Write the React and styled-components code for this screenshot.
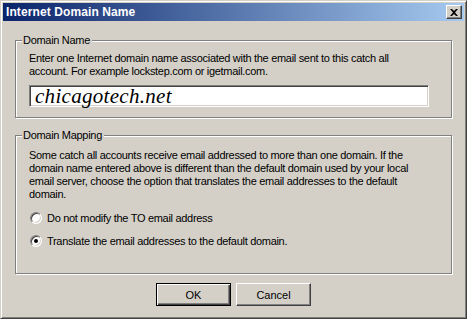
import React from 'react'
import styled, { createGlobalStyle } from 'styled-components'

const GlobalStyle = createGlobalStyle`
  html, body {
    margin: 0;
    padding: 0;
    background: #d4d0c8;
  }
  body {
    font-family: "Liberation Sans", Arial, sans-serif;
    font-size: 11px;
    color: #000;
  }
`

const Window = styled.div`
  box-sizing: border-box;
  width: 467px;
  height: 319px;
  background: #d4d0c8;
  border: 1px solid;
  border-color: #d4d0c8 #404040 #404040 #d4d0c8;
  box-shadow: inset 1px 1px 0 #fff, inset -1px -1px 0 #808080;
  padding: 2px;
  display: flex;
  flex-direction: column;
`

const TitleBar = styled.div`
  height: 18px;
  display: flex;
  align-items: center;
  justify-content: space-between;
  padding: 0 2px 0 3px;
  background: linear-gradient(to right, #0a246a, #a6caf0);
`

const Title = styled.span`
  color: #fff;
  font-weight: bold;
  font-size: 12px;
  letter-spacing: 0.1px;
`

const CloseButton = styled.button`
  box-sizing: border-box;
  width: 16px;
  height: 14px;
  padding: 0;
  display: flex;
  align-items: center;
  justify-content: center;
  background: #d4d0c8;
  border: 1px solid;
  border-color: #fff #404040 #404040 #fff;
  box-shadow: inset -1px -1px 0 #808080;
`

const Body = styled.div`
  flex: 1;
  display: flex;
  flex-direction: column;
  padding: 19px 12px 0 12px;
`

const GroupBox = styled.div`
  position: relative;
  border: 1px solid #808080;
  box-shadow: inset 1px 1px 0 #fff, 1px 1px 0 #fff;
  padding: ${p => p.$pad};
  margin-bottom: ${p => p.$gap || 0}px;
  letter-spacing: -0.3px;
`

const Legend = styled.span`
  position: absolute;
  top: -7px;
  left: 6px;
  padding: 0 2px 0 1px;
  background: #d4d0c8;
  line-height: 13px;
`

const Text = styled.p`
  margin: 0;
  line-height: 13px;
`

const Input = styled.div`
  box-sizing: border-box;
  width: 400px;
  height: 22px;
  margin-top: 7px;
  background: #fff;
  border: 1px solid;
  border-color: #808080 #fff #fff #808080;
  box-shadow: inset 1px 1px 0 #404040, inset -1px -1px 0 #d4d0c8;
  display: flex;
  align-items: center;
  padding-left: 5px;
  font-family: "Liberation Serif", "Times New Roman", serif;
  font-style: italic;
  font-size: 21px;
  letter-spacing: 0.3px;
`

const Options = styled.div`
  display: flex;
  flex-direction: column;
  gap: 9px;
  margin-top: 10px;
  padding-left: 1px;
`

const Option = styled.label`
  display: flex;
  align-items: center;
  gap: 5px;
  height: 14px;
`

const Radio = styled.span`
  box-sizing: border-box;
  width: 12px;
  height: 12px;
  border-radius: 50%;
  background: #fff;
  border: 1px solid;
  border-color: #808080 #fff #fff #808080;
  box-shadow: inset 1px 1px 0 #404040, inset -1px -1px 0 #d4d0c8;
  display: flex;
  align-items: center;
  justify-content: center;
  &::after {
    content: '';
    width: 4px;
    height: 4px;
    border-radius: 50%;
    background: ${p => (p.$checked ? '#000' : 'transparent')};
  }
`

const Buttons = styled.div`
  display: flex;
  justify-content: center;
  gap: 5px;
  margin-top: 9px;
`

const Button = styled.button`
  box-sizing: border-box;
  width: 75px;
  height: 23px;
  padding: 0;
  font-family: "Liberation Sans", Arial, sans-serif;
  font-size: 11px;
  color: #000;
  background: #d4d0c8;
  border: 1px solid;
  border-color: ${p => (p.$default ? '#000' : '#fff #404040 #404040 #fff')};
  box-shadow: ${p =>
    p.$default
      ? 'inset 1px 1px 0 #fff, inset -1px -1px 0 #404040, inset -2px -2px 0 #808080'
      : 'inset -1px -1px 0 #808080'};
`

const CloseIcon = () => (
  <svg width='8' height='7' viewBox='0 0 8 7'>
    <path d='M0 0h2l2 2 2-2h2L5 3.5 8 7H6L4 5 2 7H0l3-3.5z' fill='#000' />
  </svg>
)

const App = () => {
  return (
    <>
      <GlobalStyle />
      <Window>
        <TitleBar>
          <Title>Internet Domain Name</Title>
          <CloseButton>
            <CloseIcon />
          </CloseButton>
        </TitleBar>
        <Body>
          <GroupBox $pad='11px 13px 10px 13px' $gap={17}>
            <Legend>Domain Name</Legend>
            <Text>
              Enter one Internet domain name associated with the email sent to this catch all
              <br />
              account. For example lockstep.com or igetmail.com.
            </Text>
            <Input>chicagotech.net</Input>
          </GroupBox>
          <GroupBox $pad='13px 13px 25px 13px'>
            <Legend>Domain Mapping</Legend>
            <Text>
              Some catch all accounts receive email addressed to more than one domain. If the
              <br />
              domain name entered above is different than the default domain used by your local
              <br />
              email server, choose the option that translates the email addresses to the default
              <br />
              domain.
            </Text>
            <Options>
              <Option>
                <Radio />
                Do not modify the TO email address
              </Option>
              <Option>
                <Radio $checked />
                Translate the email addresses to the default domain.
              </Option>
            </Options>
          </GroupBox>
          <Buttons>
            <Button $default>OK</Button>
            <Button>Cancel</Button>
          </Buttons>
        </Body>
      </Window>
    </>
  )
}

export default App
